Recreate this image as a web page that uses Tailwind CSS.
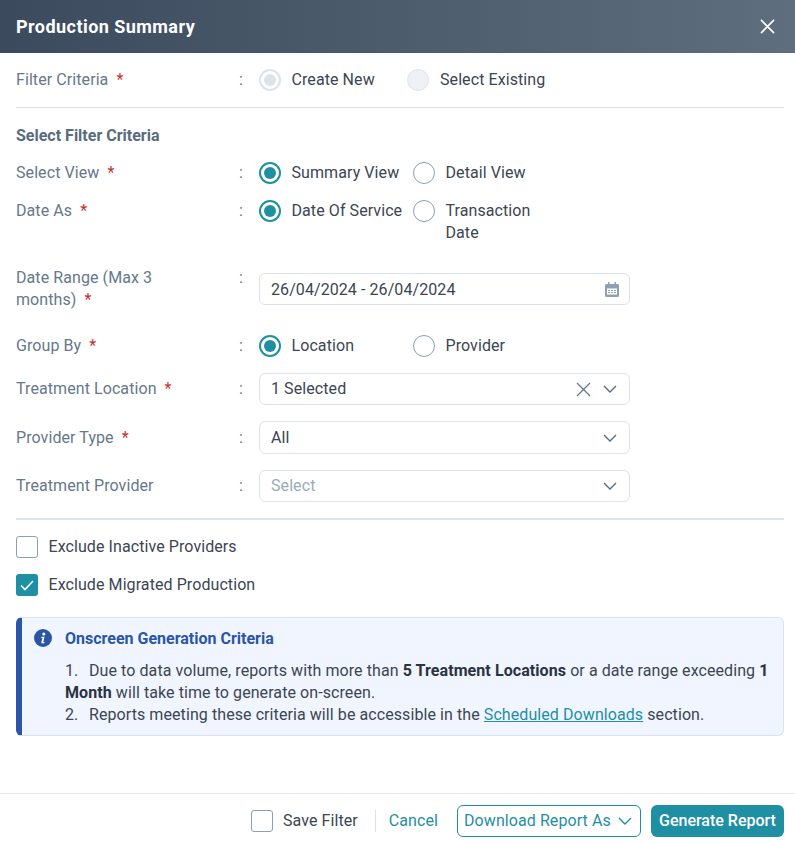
<!DOCTYPE html>
<html lang="en">
<head>
    <meta charset="UTF-8">
    <meta name="viewport" content="width=device-width, initial-scale=1.0">
    <title>Production Summary</title>
    <script src="https://cdn.jsdelivr.net/npm/@tailwindcss/browser@4"></script>
</head>
<body class="bg-white h-[843px] overflow-hidden flex flex-col font-['Roboto',sans-serif] text-[16px] leading-[22px] tracking-[0.08px] text-[#3b4652]">
<header class="h-[53px] shrink-0 flex items-center justify-between pl-4 pr-5 bg-gradient-to-r from-[#3b4b5d] to-[#5e6e7e] text-white">
    <h1 class="text-[18px] font-bold tracking-[0.45px]">Production Summary</h1>
    <svg class="w-[15px] h-[15px]" viewBox="0 0 16 16" fill="none" stroke="white" stroke-width="1.7"><path d="M1 1l14 14M15 1L1 15"/></svg>
</header>

<main class="flex-1 pl-4 pr-[11px]">
    <div class="flex items-center h-[22px] mt-4">
        <div class="w-[223px] text-[#66788a]">Filter Criteria <span class="text-[#c53030] ml-1">*</span></div>
        <div class="w-5 text-[#66788a]">:</div>
        <div class="flex items-center w-[148px]">
            <span class="w-[22px] h-[22px] rounded-full border-2 border-[#dde3ea] flex items-center justify-center"><span class="w-3 h-3 rounded-full bg-[#dde3ea]"></span></span>
            <span class="ml-[10.5px]">Create New</span>
        </div>
        <div class="flex items-center">
            <span class="w-[22px] h-[22px] rounded-full border border-[#dde3ea] bg-[#eef1f5]"></span>
            <span class="ml-[11px]">Select Existing</span>
        </div>
    </div>
    <div class="h-px bg-[#dde3ea] mt-4"></div>
    <h2 class="mt-[17px] font-bold text-[16px] tracking-normal text-[#5a6b7d]">Select Filter Criteria</h2>

    <div class="flex items-center h-[22px] mt-[15px]">
        <div class="w-[223px] text-[#66788a]">Select View <span class="text-[#c53030] ml-1">*</span></div>
        <div class="w-5 text-[#66788a]">:</div>
        <div class="flex items-center w-[154px]">
            <span class="w-[22px] h-[22px] rounded-full border-2 border-[#1f8fa3] flex items-center justify-center"><span class="w-3 h-3 rounded-full bg-[#1f8fa3]"></span></span>
            <span class="ml-[10.5px]">Summary View</span>
        </div>
        <div class="flex items-center">
            <span class="w-[22px] h-[22px] rounded-full border border-[#8ba0b2]"></span>
            <span class="ml-[10.5px]">Detail View</span>
        </div>
    </div>

    <div class="flex items-start mt-4">
        <div class="w-[223px] text-[#66788a]">Date As <span class="text-[#c53030] ml-1">*</span></div>
        <div class="w-5 text-[#66788a]">:</div>
        <div class="flex items-center w-[154px]">
            <span class="w-[22px] h-[22px] rounded-full border-2 border-[#1f8fa3] flex items-center justify-center"><span class="w-3 h-3 rounded-full bg-[#1f8fa3]"></span></span>
            <span class="ml-[10.5px]">Date Of Service</span>
        </div>
        <div class="flex items-start">
            <span class="w-[22px] h-[22px] rounded-full border border-[#8ba0b2]"></span>
            <span class="ml-[10.5px] w-[100px]">Transaction Date</span>
        </div>
    </div>

    <div class="flex items-start mt-[23px]">
        <div class="w-[223px] text-[#66788a]"><div class="w-[170px]">Date Range (Max 3 months) <span class="text-[#c53030] ml-1">*</span></div></div>
        <div class="w-5 text-[#66788a]">:</div>
        <div class="w-[371px] h-8 mt-[6px] border border-[#dde3ea] rounded-md flex items-center justify-between pl-[11px] pr-[10px]">
            <span class="pt-px">26/04/2024 - 26/04/2024</span>
            <svg class="w-[14px] h-[15px]" viewBox="0 0 14 15" fill="#8fa1b1"><path d="M3 0h1.5v2h5V0H11v2h1.5A1.5 1.5 0 0 1 14 3.500v10a1.500 1.500 0 0 1-1.500 1.500h-11A1.500 1.500 0 0 1 0 13.500v-10A1.500 1.500 0 0 1 1.500 2H3z"/><path fill="#fff" d="M2 6.500h10v6H2z"/><path d="M3 8h2v1H3zM6 8h2v1H6zM9 8h2v1H9zM3 10h2v1H3zM6 10h2v1H6zM9 10h2v1H9z"/></svg>
        </div>
    </div>

    <div class="flex items-center h-[22px] mt-6">
        <div class="w-[223px] text-[#66788a]">Group By <span class="text-[#c53030] ml-1">*</span></div>
        <div class="w-5 text-[#66788a]">:</div>
        <div class="flex items-center w-[154px]">
            <span class="w-[22px] h-[22px] rounded-full border-2 border-[#1f8fa3] flex items-center justify-center"><span class="w-3 h-3 rounded-full bg-[#1f8fa3]"></span></span>
            <span class="ml-[10.5px]">Location</span>
        </div>
        <div class="flex items-center">
            <span class="w-[22px] h-[22px] rounded-full border border-[#8ba0b2]"></span>
            <span class="ml-[10.5px]">Provider</span>
        </div>
    </div>

    <div class="flex items-center mt-4">
        <div class="w-[223px] text-[#66788a]">Treatment Location <span class="text-[#c53030] ml-1">*</span></div>
        <div class="w-5 text-[#66788a]">:</div>
        <div class="w-[371px] h-8 border border-[#dde3ea] rounded-md flex items-center pl-[11px] pr-[12px]">
            <span class="flex-1">1 Selected</span>
            <svg class="w-[15px] h-[15px] mr-[12px]" viewBox="0 0 15 15" fill="none" stroke="#66788a" stroke-width="1.300"><path d="M1 1l13 13M14 1L1 14"/></svg>
            <svg class="w-[14px] h-2" viewBox="0 0 14 8" fill="none" stroke="#5a6b7d" stroke-width="1.400"><path d="M1 1l6 6 6-6"/></svg>
        </div>
    </div>

    <div class="flex items-center mt-4">
        <div class="w-[223px] text-[#66788a]">Provider Type <span class="text-[#c53030] ml-1">*</span></div>
        <div class="w-5 text-[#66788a]">:</div>
        <div class="w-[371px] h-[33px] border border-[#dde3ea] rounded-md flex items-center pl-[11px] pr-[12px]">
            <span class="flex-1">All</span>
            <svg class="w-[14px] h-2" viewBox="0 0 14 8" fill="none" stroke="#5a6b7d" stroke-width="1.400"><path d="M1 1l6 6 6-6"/></svg>
        </div>
    </div>

    <div class="flex items-center mt-4">
        <div class="w-[223px] text-[#66788a]">Treatment Provider</div>
        <div class="w-5 text-[#66788a]">:</div>
        <div class="w-[371px] h-8 border border-[#dde3ea] rounded-md flex items-center pl-[11px] pr-[12px]">
            <span class="flex-1 text-[#9aabb9]">Select</span>
            <svg class="w-[14px] h-2" viewBox="0 0 14 8" fill="none" stroke="#5a6b7d" stroke-width="1.400"><path d="M1 1l6 6 6-6"/></svg>
        </div>
    </div>

    <div class="h-0.5 bg-[#dde3ea] mt-4"></div>

    <label class="flex items-center mt-4">
        <span class="w-[22px] h-[22px] rounded-[3px] border border-[#8ba0b2]"></span>
        <span class="ml-[10.5px]">Exclude Inactive Providers</span>
    </label>
    <label class="flex items-center mt-4">
        <span class="w-[22px] h-[22px] rounded-[3px] bg-[#1f8fa3] flex items-center justify-center">
            <svg class="w-[14px] h-[11px]" viewBox="0 0 14 11" fill="none" stroke="white" stroke-width="1.600"><path d="M1 5.500l4 4 8-8.500"/></svg>
        </span>
        <span class="ml-[10.5px]">Exclude Migrated Production</span>
    </label>

    <section class="mt-[21px] h-[119px] rounded-md bg-[#f0f5ff] border border-[#d6e2f5] border-l-[6px] border-l-[#2a56a5] pl-[43px] pr-3 relative">
        <svg class="absolute left-[12px] top-[11px] w-[18px] h-[18px]" viewBox="0 0 18 18"><circle cx="9" cy="9" r="9" fill="#2a56a5"/><circle cx="9.800" cy="5" r="1.500" fill="#fff"/><path d="M7.500 7.800h3l-1.200 5.200h1.200l-.3 1.200H7.200l1.200-5.200H7.200z" fill="#fff"/></svg>
        <h3 class="mt-[10px] font-bold text-[16px] tracking-normal text-[#2a56a5]">Onscreen Generation Criteria</h3>
        <ol class="mt-[10px] text-[#3b4652]">
            <li><span class="inline-block w-[24px]">1.</span>Due to data volume, reports with more than <b class="text-[#2a3441]">5 Treatment Locations</b> or a date range exceeding <b class="text-[#2a3441]">1 Month</b> will take time to generate on-screen.</li>
            <li><span class="inline-block w-[24px]">2.</span>Reports meeting these criteria will be accessible in the <a class="text-[#1f8fa3] underline" href="#">Scheduled Downloads</a> section.</li>
        </ol>
    </section>
</main>

<footer class="h-[50px] shrink-0 border-t border-[#e8ebee] flex items-center justify-end pr-[11px] pt-[4px]">
    <span class="w-[22px] h-[22px] rounded-[3px] border border-[#8ba0b2]"></span>
    <span class="ml-[10px]">Save Filter</span>
    <span class="w-px h-[22px] bg-[#dde3ea] ml-[17px]"></span>
    <a class="ml-[13px] text-[#1f8fa3]" href="#">Cancel</a>
    <button class="ml-[19px] h-8 w-[184px] rounded-md border border-[#1f8fa3] text-[#1f8fa3] flex items-center justify-start pl-[6px] gap-[7px]">Download Report As
        <svg class="w-[14px] h-2" viewBox="0 0 14 8" fill="none" stroke="#1f8fa3" stroke-width="1.400"><path d="M1 1l6 6 6-6"/></svg>
    </button>
    <button class="ml-[10px] h-8 w-[133px] rounded-md bg-[#1f8fa3] text-white font-medium tracking-normal">Generate Report</button>
</footer>
</body>
</html>
